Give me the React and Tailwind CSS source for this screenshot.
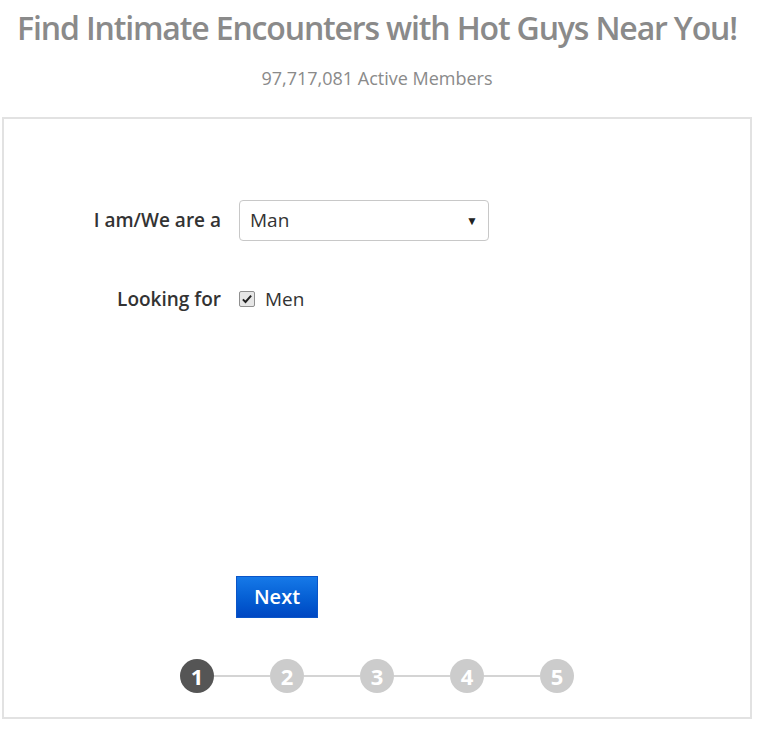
const font = { fontFamily: '"Open Sans", "Liberation Sans", sans-serif' };

function Steps({ current = 1, total = 5 }) {
  const steps = Array.from({ length: total }, (_, i) => i + 1);
  return (
    <div className="flex items-center justify-center">
      {steps.map((n) => (
        <div key={n} className="flex items-center">
          {n > 1 && <div className="w-[56px] h-[2px] bg-[#d4d4d4]" />}
          <div
            className={
              "w-[34px] h-[34px] rounded-full flex items-center justify-center text-white text-[22px] font-bold leading-none " +
              (n === current ? "bg-[#555555]" : "bg-[#cccccc]")
            }
          >
            {n}
          </div>
        </div>
      ))}
    </div>
  );
}

export default function App() {
  return (
    <div className="w-[754px] px-[2px] bg-white" style={font}>
      <h1 className="text-center text-[#8a8a8a] text-[32px] font-semibold tracking-[-1.15px] leading-none pt-[12px]">
        Find Intimate Encounters with Hot Guys Near You!
      </h1>
      <p className="text-center text-[#8a8a8a] text-[18px] mt-[25px] leading-none">
        97,717,081 Active Members
      </p>

      <div className="mt-[30px] h-[602px] border-2 border-[#e2e2e2] flex flex-col">
        <div className="grid grid-cols-[217px_1fr] gap-x-[18px] mt-[81px] items-center">
          <label className="text-right text-[#333] text-[19px] font-semibold">I am/We are a</label>
          <div className="w-[250px] h-[41px] border border-[#c8c8c8] rounded-[4px] flex items-center justify-between pl-[10px] pr-[10px] text-[19px] text-[#333]">
            <span>Man</span>
            <span className="text-[12px] text-[#222]">▼</span>
          </div>

          <label className="text-right text-[#333] text-[19px] font-semibold mt-[44px]">Looking for</label>
          <div className="flex items-center gap-[10px] mt-[44px] text-[19px] text-[#333]">
            <span className="w-[16px] h-[16px] border border-[#8f8f8f] rounded-[2px] bg-[#e6e6e6] flex items-center justify-center">
              <svg viewBox="0 0 16 16" className="w-[12px] h-[12px]">
                <path d="M2.5 8.5 L6 12 L13.5 3.5" fill="none" stroke="#222" strokeWidth="2.6" />
              </svg>
            </span>
            <span>Men</span>
          </div>
        </div>

        <div className="mt-auto pl-[232px]">
          <button className="w-[82px] h-[42px] bg-gradient-to-b from-[#1679e8] to-[#0047c2] border border-[#0a55c8] text-white text-[20px] font-semibold">
            Next
          </button>
        </div>

        <div className="mt-[41px] mb-[24px]">
          <Steps current={1} total={5} />
        </div>
      </div>
    </div>
  );
}
